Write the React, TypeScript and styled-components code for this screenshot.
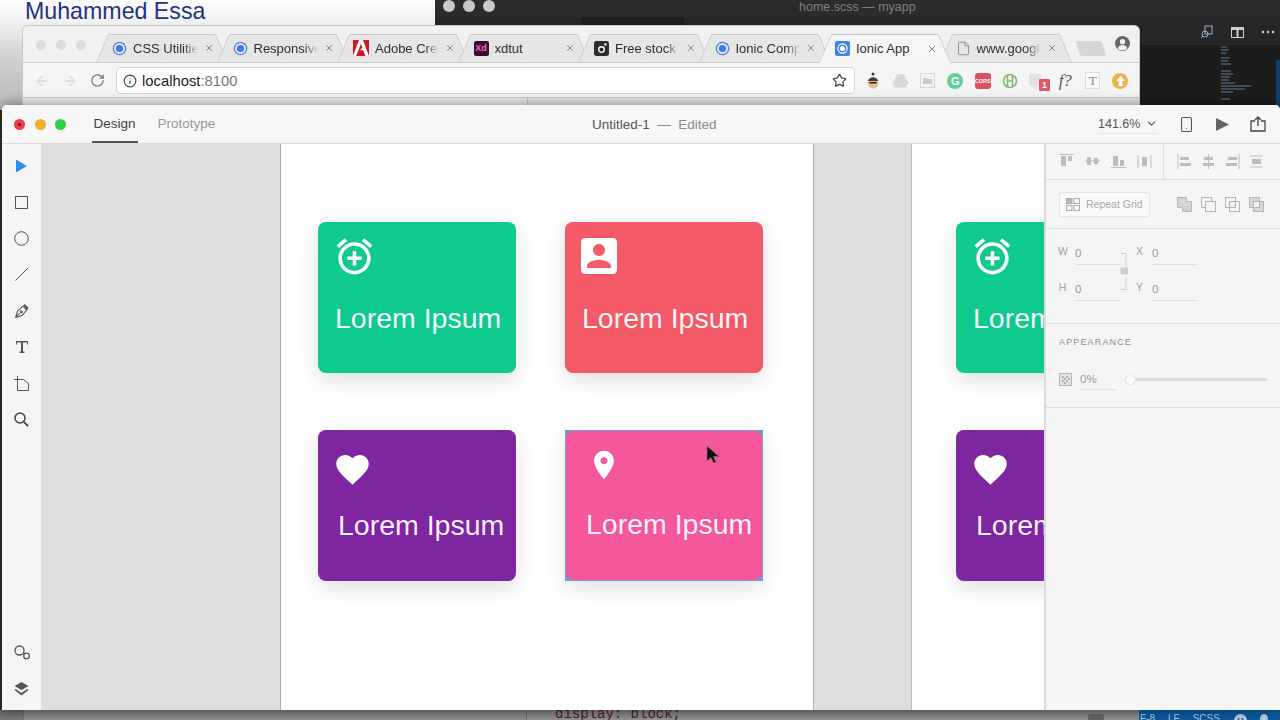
import React from "react";
import styled, { createGlobalStyle } from "styled-components";
import { ChevronDown, Smartphone, RotateCw, ArrowLeft, ArrowRight, Star, Info, File, X } from "lucide-react";

const Global = createGlobalStyle`
  html, body { margin: 0; padding: 0; background: #333; }
  body { font-family: "Liberation Sans", Arial, sans-serif; }
`;

const Desktop = styled.div`
  position: relative; width: 1280px; height: 720px; overflow: hidden;
  background: #3a2a2a;
`;

/* ---------- background document ---------- */
const DocWindow = styled.div`
  position: absolute; left: 0; top: 0; width: 435px; height: 110px;
  background: linear-gradient(#fdfdfd 0, #f4f4f4 18px, #cfcfcf 60px, #b8b8b8 100%);
`;
const DocTitle = styled.div`
  padding-left: 25px; font-size: 23.2px; line-height: 23px; color: #23337c;
`;

/* ---------- background editor ---------- */
const EditorWindow = styled.div`
  position: absolute; left: 435px; top: 0; right: 0; height: 110px; background: #1c1c1c;
`;
const EditorBar = styled.div`
  display: flex; align-items: center; height: 17px; padding-left: 8px; gap: 8px;
  background: #2b2b2b; position: relative;
`;
const EditorDot = styled.span`
  width: 12px; height: 12px; border-radius: 50%; background: #c9c9c9; margin-top: -6px;
`;
const EditorTitle = styled.div`
  position: absolute; left: 364px; top: 0; font-size: 12.5px; line-height: 14px; color: #7f7f7f;
`;
const EditorTabs = styled.div`
  display: flex; height: 28px; background: #262626;
`;
const EditorTab = styled.div<{ $w: number; $bg: string }>`
  width: ${(p) => p.$w}px; background: ${(p) => p.$bg};
`;
const EditorActions = styled.div`
  position: absolute; left: 765px; top: 24px; height: 16px;
  display: flex; gap: 17px; align-items: center; color: #b9b9b9;
`;
const Minimap = styled.svg`
  position: absolute; left: 785px; top: 44px;
`;
const EditorScroll = styled.div`
  position: absolute; right: 0; top: 60px; width: 4px; height: 50px; background: #0f3f68;
`;

/* ---------- Chrome ---------- */
const ChromeWindow = styled.div`
  position: absolute; left: 23px; top: 26px; width: 1116px; height: 84px;
  border-radius: 5px 5px 0 0; background: #f4f4f4; overflow: hidden;
  box-shadow: 0 0 0 1px #c8c8c8;
`;
const TabStrip = styled.div`
  display: flex; height: 37px; align-items: flex-end; background: #f1f1f1; position: relative;
  border-bottom: 1px solid #cfcfcf; box-sizing: border-box; padding-left: 79px;
`;
const GreyDots = styled.div`
  position: absolute; left: 13px; top: 14px; display: flex; gap: 10px;
`;
const GreyDot = styled.span`
  width: 10px; height: 10px; border-radius: 50%; background: #dcdcdc;
`;
const Tab = styled.div<{ $active?: boolean }>`
  position: relative; isolation: isolate; box-sizing: border-box; flex: none;
  width: 120.5px; height: ${(p) => (p.$active ? 29 : 28)}px; margin-bottom: ${(p) => (p.$active ? -1 : 0)}px;
  display: flex; align-items: center; gap: 6px; padding: 0 9px 0 10px;
  font-size: 13px; color: #2e2e2e;
  ${(p) => (p.$active ? "z-index: 1;" : "")}
  &::before, &::after {
    content: ""; position: absolute; top: 0; bottom: 0; width: 55%; z-index: -1;
    background: ${(p) => (p.$active ? "#f6f6f6" : "#e6e6e6")};
    border-top: 1px solid #c6c6c6; box-sizing: border-box;
  }
  &::before { left: 0; transform: skewX(-23deg); border-left: 1px solid #c2c2c2; border-radius: 2px 0 0 0; }
  &::after { right: 0; transform: skewX(23deg); border-right: 1px solid #c2c2c2; border-radius: 0 2px 0 0; }
`;
const TabTitle = styled.span<{ $fade?: boolean }>`
  flex: 1; min-width: 0; overflow: hidden; white-space: nowrap;
  ${(p) => (p.$fade ? "mask-image: linear-gradient(90deg, #000 78%, transparent 100%);" : "")}
`;
const TabClose = styled(X)`
  flex: none; width: 10px; height: 10px; color: #555;
`;
const TabFile = styled(File)`
  flex: none; color: #777;
`;
const TabSvg = styled.svg`
  flex: none;
`;
const NewTab = styled.div`
  width: 26px; height: 15px; margin: 0 0 6px 12px; background: #d6d6d6; transform: skewX(18deg); border-radius: 2px;
`;
const Avatar = styled.svg`
  position: absolute; right: 9px; top: 10px;
`;
const ChromeBar = styled.div`
  display: flex; align-items: center; height: 35px; box-sizing: border-box;
  padding: 1px 0 0 11px; background: #f5f5f5; border-bottom: 1px solid #cfcfcf;
`;
const NavBtn = styled.span<{ $c: string }>`
  display: flex; width: 28px; justify-content: flex-start; color: ${(p) => p.$c};
`;
const Omnibox = styled.div`
  display: flex; align-items: center; width: 739px; height: 27px; margin-left: -2px; box-sizing: border-box;
  background: #fff; border: 1px solid #d5d5d5; border-radius: 4px; padding: 0 7px 0 6px; gap: 5px;
  font-size: 14.8px; color: #222;
`;
const Port = styled.span`
  color: #777;
`;
const OmniSpacer = styled.span` flex: 1; `;
const Extensions = styled.div`
  display: flex; align-items: center; margin-left: 4px;
`;
const Ext = styled.div`
  position: relative; width: 27.5px; height: 20px; display: flex; align-items: center; justify-content: center;
`;
const ExtCircle = styled.div<{ $bg: string }>`
  display: flex; align-items: center; justify-content: center;
  width: 16px; height: 16px; border-radius: 50%; background: ${(p) => p.$bg}; color: #fff; font-size: 11px; font-weight: bold;
`;
const CorsBadge = styled.div`
  width: 16px; height: 16px; border-radius: 3px; background: #d9505f; color: #fff;
  font-size: 5.5px; font-weight: bold; line-height: 16px; text-align: center;
`;
const CountBadge = styled.div`
  position: absolute; left: 15px; top: 8px; width: 11px; height: 12px; background: #dc5a68; color: #fff;
  font-size: 9px; line-height: 12px; font-weight: bold; text-align: center; border-radius: 1px;
`;
const Shield = styled.svg`
  margin-left: -6px;
`;
const FHelp = styled.span`
  font-family: "Liberation Serif", serif; font-style: italic; font-size: 17px; color: #555;
`;
const TBox = styled.div`
  width: 13px; height: 15px; border: 1px solid #ddd; background: #fafafa; color: #888;
  font-family: "Liberation Serif", serif; font-size: 13px; line-height: 15px; text-align: center;
`;
const ChromeBelow = styled.div`
  display: flex; height: 12px; background: #e6e6e6;
`;
const BelowPane = styled.div<{ $w: number }>`
  width: ${(p) => p.$w}px; border-right: 1px solid #c4c4c4; background: #eee;
`;
const Favicon = styled.div<{ $bg: string; $c?: string; $s?: number }>`
  flex: none; display: flex; align-items: center; justify-content: center;
  width: ${(p) => p.$s ?? 15}px; height: ${(p) => p.$s ?? 15}px; border-radius: 2px; background: ${(p) => p.$bg};
  color: ${(p) => p.$c ?? "#fff"}; font-size: 9px; font-weight: bold;
`;

/* ---------- XD ---------- */
const XdWindow = styled.div`
  position: absolute; left: 2px; top: 105px; width: 1278px; height: 605px;
  display: flex; flex-direction: column; background: #f5f5f5; overflow: hidden;
  border-radius: 5px 5px 0 0; box-shadow: 0 0 14px rgba(0,0,0,.45);
`;
const XdTitleBar = styled.div`
  flex: none; display: grid; grid-template-columns: 590px auto 1fr; align-items: center; height: 39px;
  box-sizing: border-box; background: #f7f7f7; border-bottom: 1px solid #dcdcdc; font-size: 13px;
`;
const XdLeft = styled.div`
  display: flex; align-items: center; height: 100%; padding-left: 12px;
`;
const Light = styled.span<{ $c: string }>`
  width: 11px; height: 11px; border-radius: 50%; background: ${(p) => p.$c}; margin-right: 9.5px;
  display: flex; align-items: center; justify-content: center;
`;
const LightPip = styled.span`
  width: 3px; height: 3px; border-radius: 50%; background: #5a0b10;
`;
const ModeTab = styled.div<{ $on?: boolean }>`
  display: flex; align-items: center; height: 100%; box-sizing: border-box; padding: 0 2px; font-size: 13.5px;
  color: ${(p) => (p.$on ? "#444" : "#9a9a9a")};
  border-bottom: 2px solid ${(p) => (p.$on ? "#555" : "transparent")};
  margin-left: ${(p) => (p.$on ? "16px" : "18px")};
`;
const DocName = styled.div`
  color: #555; font-size: 13.5px; white-space: nowrap;
`;
const Edited = styled.span`
  color: #8c8c8c;
`;
const XdRight = styled.div`
  display: flex; align-items: center; justify-content: flex-end; padding-right: 4px; color: #555;
`;
const Zoom = styled.div`
  display: flex; align-items: center; justify-content: space-between; width: 60px; height: 100%;
  font-size: 12.5px; color: #555; padding: 2px 0; border-bottom: 1px solid #e2e2e2; margin-right: 10px;
`;
const XdBtn = styled.span`
  display: flex; width: 36px; justify-content: center;
`;
const XdBody = styled.div`
  flex: 1; display: flex; min-height: 0;
`;
const ToolRail = styled.div`
  flex: none; width: 39px; display: flex; flex-direction: column; align-items: center; padding: 4px 0 3px; background: #f5f5f5;
`;
const Tool = styled.div<{ $push?: boolean }>`
  display: flex; align-items: center; justify-content: center; width: 100%; height: 36.2px; color: #555;
  ${(p) => (p.$push ? "margin-top: auto;" : "")}
`;
const Canvas = styled.div`
  flex: 1; display: flex; min-width: 0; background: #dedede; overflow: hidden; padding-left: 239px;
`;
const Artboard = styled.div<{ $w: number; $pad: number }>`
  flex: none; box-sizing: border-box; width: ${(p) => p.$w}px; background: #fff; border-left: 1px solid #aaa; border-right: 1px solid #aaa;
  padding: 78px 0 0 ${(p) => p.$pad}px;
`;
const ArtboardTwo = styled(Artboard)`
  margin-left: 97px; border-left: 1px solid #bbb; border-right: none; overflow: hidden;
`;
const CardGrid = styled.div`
  display: grid; grid-template-columns: 198px 198px; grid-auto-rows: 151px; column-gap: 49px; row-gap: 57px;
`;
const Card = styled.div<{ $bg: string }>`
  position: relative; background: ${(p) => p.$bg}; border-radius: 8px; color: rgba(255,255,255,.94);
  box-shadow: 0 7px 22px rgba(0,0,0,.13);
`;
const CardBody = styled.div<{ $ix: number; $iy: number; $tx: number; $ty: number }>`
  display: flex; flex-direction: column; align-items: flex-start; padding-top: ${(p) => p.$iy}px;
  svg { margin-left: ${(p) => p.$ix}px; flex: none; }
  span { margin: ${(p) => p.$ty}px 0 0 ${(p) => p.$tx}px; }
`;
const CardLabel = styled.span`
  font-size: 28.5px; line-height: 34px; white-space: nowrap;
`;
const Selection = styled.div`
  position: absolute; inset: 0; border: 1px solid #7b9bdc; pointer-events: none;
`;
const Handle = styled.i<{ $x: "left" | "right"; $y: "top" | "bottom" }>`
  position: absolute; width: 4px; height: 4px; background: #5d9fe0;
  ${(p) => p.$x}: -1px; ${(p) => p.$y}: -1px;
`;
const Cursor = styled.svg`
  position: absolute; left: 140px; top: 14px;
`;

/* ---------- property panel ---------- */
const Panel = styled.div`
  flex: none; width: 235px; box-sizing: border-box; background: #f5f5f5; border-left: 1px solid #d8d8d8;
  display: flex; flex-direction: column; color: #aaa; font-size: 11px;
`;
const PanelSection = styled.div<{ $h: number }>`
  flex: none; height: ${(p) => p.$h}px; box-sizing: border-box; border-bottom: 1px solid #dedede;
`;
const AlignRow = styled(PanelSection)`
  display: grid; grid-template-columns: 117px 1fr;
`;
const AlignGroup = styled.div<{ $line?: boolean }>`
  display: flex; align-items: center; gap: ${(p) => (p.$line ? "9px" : "11px")}; padding-left: 13px;
  ${(p) => (p.$line ? "border-left: 1px solid #dedede;" : "")}
`;
const GridRow = styled(PanelSection)`
  display: flex; align-items: center; padding-left: 13px;
`;
const RepeatBtn = styled.div`
  display: flex; align-items: center; gap: 6px; width: 91px; height: 25px; box-sizing: border-box; padding-left: 6px;
  background: #f9f9f9; border: 1px solid #e4e4e4; border-radius: 3px; font-size: 10.5px; color: #a9a9a9;
`;
const BoolGroup = styled.div`
  display: flex; gap: 9px; margin-left: 27px;
`;
const TransformGrid = styled(PanelSection)`
  position: relative; display: grid; grid-template-columns: 77px 70px; grid-auto-rows: 36px; padding: 4px 0 0 12px;
`;
const Field = styled.div`
  display: flex; align-items: center; gap: 8px; height: 36px;
`;
const FieldKey = styled.span`
  width: 9px; font-size: 10.5px; color: #a0a0a0; text-align: center;
`;
const FieldValue = styled.span<{ $w: number }>`
  width: ${(p) => p.$w}px; height: 24px; box-sizing: border-box; line-height: 24px; margin-top: 4px; font-size: 11.5px;
  color: #999; border-bottom: 1px solid #e0e0e0;
`;
const LockLink = styled.svg`
  position: absolute; left: 74px; top: 24px;
`;
const Appearance = styled(PanelSection)`
  padding: 12px 0 0 13px;
`;
const SectionLabel = styled.div`
  font-size: 9px; line-height: 12px; letter-spacing: 1.15px; color: #8f8f8f;
`;
const OpacityRow = styled.div`
  display: flex; align-items: center; margin-top: 19px; height: 24px;
`;
const OpacityValue = styled.span`
  margin-left: 8px; width: 36px; height: 22px; line-height: 22px; box-sizing: border-box; font-size: 11.5px;
  color: #999; border-bottom: 1px solid #e0e0e0;
`;
const Slider = styled.div`
  position: relative; width: 137px; height: 3px; margin-left: 14px; background: #dadada; border-radius: 2px;
`;
const Knob = styled.div`
  position: absolute; left: -5px; top: -4px; width: 11px; height: 11px; border-radius: 50%; background: #fbfbfb; border: 1px solid #e2e2e2; box-sizing: border-box;
`;

/* ---------- peek at the bottom ---------- */
const BottomStrip = styled.div`
  position: absolute; left: 0; right: 0; bottom: 0; height: 10px; display: flex; overflow: hidden;
`;
const BottomEdge = styled.div`
  flex: none; width: 23px; background: linear-gradient(#666, #7a7a7a);
`;
const BottomPane = styled.div`
  flex: none; width: 504px; box-sizing: border-box; background: linear-gradient(#777, #8f8f8f); border: 1px solid #6c6c6c; border-width: 0 1px;
`;
const BottomCode = styled.div`
  flex: none; display: flex; width: 612px; box-sizing: border-box; padding: 0 35px 0 28px; background: linear-gradient(#777, #949494);
  font-family: "Liberation Mono", monospace; font-size: 14px; line-height: 9px; color: #4c1a22;
`;
const ScrollBlob = styled.span`
  flex: none; width: 16px; height: 8px; margin: 4px 0 0 auto; border-radius: 3px; background: #666;
`;
const StatusBar = styled.div`
  flex: 1; display: flex; background: #0a5a9e; color: #b7cfe6; font-size: 10px; line-height: 17px; gap: 13px; padding-left: 1px; white-space: nowrap;
`;
const StatusIcons = styled.div`
  display: flex; gap: 11px; margin: 4px 0 0 1px;
`;

/* ---------- drawings ---------- */
const IonicIcon = () => (
  <TabSvg width="15" height="15" viewBox="0 0 16 16">
    <circle cx="8" cy="8" r="6.6" fill="none" stroke="#4f7fe0" strokeWidth="1.4" />
    <circle cx="8" cy="8" r="3.8" fill="#3f78ea" />
    <circle cx="12.6" cy="3.3" r="1" fill="#4f7fe0" />
  </TabSvg>
);
const AdobeIcon = () => (
  <TabSvg width="16" height="16" viewBox="0 0 15 15">
    <rect width="15" height="15" fill="#d8141c" />
    <polygon points="5.6,0 9.4,0 15,15 11.6,15 9.6,9.5 6.6,9.5 8.8,7 7.5,3.4 3,15 0,15" fill="#fff" />
  </TabSvg>
);
const InstaIcon = () => (
  <TabSvg width="15" height="15" viewBox="0 0 14 14">
    <rect width="14" height="14" rx="2.5" fill="#2d2d2d" />
    <circle cx="7" cy="8" r="2.6" fill="none" stroke="#fff" strokeWidth="1.3" />
    <rect x="9.6" y="2.2" width="2" height="2" fill="#fff" />
  </TabSvg>
);

const AlarmAdd = () => (
  <svg width="43" height="43" viewBox="0 0 24 24" fill="#fff">
    <path d="M7.88 3.39L6.6 1.86 2 5.71l1.29 1.53 4.59-3.85zM22 5.72l-4.6-3.86-1.29 1.53 4.6 3.86L22 5.72zM12 4c-4.97 0-9 4.03-9 9s4.02 9 9 9c4.97 0 9-4.03 9-9s-4.03-9-9-9zm0 16c-3.87 0-7-3.13-7-7s3.13-7 7-7 7 3.13 7 7-3.13 7-7 7zm1-11h-2v3H8v2h3v3h2v-3h3v-2h-3V9z" />
  </svg>
);
const AccountBox = () => (
  <svg width="48" height="48" viewBox="0 0 24 24" fill="#fff">
    <path d="M3 5v14c0 1.1.89 2 2 2h14c1.1 0 2-.9 2-2V5c0-1.1-.9-2-2-2H5c-1.11 0-2 .9-2 2zm12 4c0 1.66-1.34 3-3 3s-3-1.34-3-3 1.34-3 3-3 3 1.34 3 3zm-9 8c0-2 4-3.1 6-3.1s6 1.1 6 3.1v1H6v-1z" />
  </svg>
);
const Heart = () => (
  <svg width="39" height="39" viewBox="0 0 24 24" fill="#fff">
    <path d="M12 21.35l-1.45-1.32C5.4 15.36 2 12.28 2 8.5 2 5.42 4.42 3 7.5 3c1.74 0 3.41.81 4.5 2.09C13.09 3.81 14.76 3 16.5 3 19.58 3 22 5.42 22 8.5c0 3.78-3.4 6.86-8.55 11.54L12 21.35z" />
  </svg>
);
const Pin = () => (
  <svg width="34" height="34" viewBox="0 0 24 24" fill="#fff">
    <path d="M12 2C8.13 2 5 5.13 5 9c0 5.25 7 13 7 13s7-7.75 7-13c0-3.87-3.13-7-7-7zm0 9.5c-1.38 0-2.5-1.12-2.5-2.5s1.12-2.5 2.5-2.5 2.5 1.12 2.5 2.5-1.12 2.5-2.5 2.5z" />
  </svg>
);

const alignPaths: string[] = [
  "M0 .5h15M2 2h5v10H2zM9 2h4v5H9z",
  "M0 7h15M2 3h4v8H2zM9 4h4v6H9z",
  "M0 13.5h15M2 2h5v10H2zM9 6h4v6H9z",
  "M1 1v13M14 1v13M5 3h5v9H5z",
  "M1 0v15M3 3h9v3H3zM3 9h11v3H3z",
  "M7.5 0v15M3 3h9v3H3zM2 9h11v3H2z",
  "M14 0v15M3 3h9v3H3zM1 9h11v3H1z",
  "M1 2h13M1 13h13M3 5h9v5H3z",
];
const AlignIcon = ({ d }: { d: string }) => (
  <svg width="15" height="15" viewBox="0 0 15 15">
    {d.split("M").filter(Boolean).map((seg, i) =>
      seg.includes("z") ? <path key={i} d={"M" + seg} fill="#bdbdbd" /> : <path key={i} d={"M" + seg} stroke="#bdbdbd" fill="none" />
    )}
  </svg>
);
const BoolIcon = ({ kind }: { kind: number }) => (
  <svg width="15" height="15" viewBox="0 0 15 15" fill="none" stroke="#b5b5b5">
    {kind === 0 && <path d="M.5.5h9v4h5v10h-9v-4h-5z" fill="#d4d4d4" />}
    {kind === 1 && <><rect x="4.5" y="4.5" width="10" height="10" fill="#f5f5f5" /><path d="M4.5 10.5h-4v-10h10v4" /></>}
    {kind === 2 && <><rect x=".5" y=".5" width="10" height="10" /><rect x="4.5" y="4.5" width="10" height="10" /><rect x="4.5" y="4.5" width="6" height="6" fill="#f0f0f0" /></>}
    {kind === 3 && <><rect x=".5" y=".5" width="10" height="10" fill="#d8d8d8" /><rect x="4.5" y="4.5" width="10" height="10" fill="#d8d8d8" /><rect x="4.5" y="4.5" width="6" height="6" fill="#f5f5f5" /></>}
  </svg>
);

type CardSpec = { bg: string; ix: number; iy: number; tx: number; ty: number; icon: React.ReactNode };
const cards: CardSpec[] = [
  { bg: "#0fca8f", ix: 15, iy: 13, tx: 17, ty: 23, icon: <AlarmAdd /> },
  { bg: "#f45a68", ix: 10, iy: 10, tx: 17, ty: 21, icon: <AccountBox /> },
  { bg: "#7e25a0", ix: 15, iy: 20, tx: 20, ty: 19, icon: <Heart /> },
  { bg: "#f4579c", ix: 22, iy: 18, tx: 21, ty: 25, icon: <Pin /> },
];

const CardCells = ({ selected }: { selected?: boolean }) => (
  <CardGrid>
    {cards.map((c, i) => (
      <Card key={i} $bg={c.bg}>
        <CardBody $ix={c.ix} $iy={c.iy} $tx={c.tx} $ty={c.ty}>
          {c.icon}
          <CardLabel>Lorem Ipsum</CardLabel>
        </CardBody>
        {selected && i === 3 && (
          <Selection>
            <Handle $x="left" $y="top" />
            <Handle $x="right" $y="top" />
            <Handle $x="left" $y="bottom" />
            <Handle $x="right" $y="bottom" />
            <Cursor width="14" height="20" viewBox="0 0 14 20">
              <path d="M1 1v15l4-3.5 2.6 5.5 2.4-1.1-2.6-5.4H13z" fill="#111" stroke="#777" strokeWidth=".6" />
            </Cursor>
          </Selection>
        )}
      </Card>
    ))}
  </CardGrid>
);

const tabs: { icon: React.ReactNode; title: string; fade?: boolean }[] = [
  { icon: <IonicIcon />, title: "CSS Utilities", fade: true },
  { icon: <IonicIcon />, title: "Responsive", fade: true },
  { icon: <AdobeIcon />, title: "Adobe Creative", fade: true },
  { icon: <Favicon $bg="#3d0a33" $c="#f06cc4">Xd</Favicon>, title: "xdtut" },
  { icon: <InstaIcon />, title: "Free stock photos", fade: true },
  { icon: <IonicIcon />, title: "Ionic Components", fade: true },
];

export default function App() {
  return (
    <>
      <Global />
      <Desktop>
        <DocWindow>
          <DocTitle>Muhammed Essa</DocTitle>
        </DocWindow>

        <EditorWindow>
          <EditorBar>
            <EditorDot />
            <EditorDot />
            <EditorDot />
            <EditorTitle>home.scss — myapp</EditorTitle>
          </EditorBar>
          <EditorTabs>
            <EditorTab $w={147} $bg="#262626" />
            <EditorTab $w={102} $bg="#1d1d1d" />
            <EditorTab $w={96} $bg="#262626" />
          </EditorTabs>
          <EditorActions>
            <svg width="14" height="14" viewBox="0 0 14 14" fill="none" stroke="#9db4c8"><rect x="5" y="1" width="7" height="8" /><circle cx="5" cy="9" r="3" /><path d="M1 13l2-2" /></svg>
            <svg width="13" height="13" viewBox="0 0 13 13" fill="none" stroke="#cfcfcf"><rect x=".5" y="1.5" width="12" height="10" /><path d="M6.5 1.5v10M.5 3h12" strokeWidth="2" /></svg>
            <svg width="14" height="4" viewBox="0 0 14 4" fill="#cfcfcf"><circle cx="2" cy="2" r="1.2" /><circle cx="7" cy="2" r="1.2" /><circle cx="12" cy="2" r="1.2" /></svg>
          </EditorActions>
          <Minimap width="32" height="62" viewBox="0 0 32 62" stroke="#5d7f96" strokeWidth="1">
            <path d="M1 3h6M1 6h8M1 9h5M1 14h9M1 17h7M1 20h10" />
            <path d="M1 27h10M1 30h12M1 33h9M1 36h8M1 39h14M1 42h30M1 45h24M1 48h12M1 55h9" />
          </Minimap>
          <EditorScroll />
        </EditorWindow>

        <ChromeWindow>
          <TabStrip>
            <GreyDots>
              <GreyDot />
              <GreyDot />
              <GreyDot />
            </GreyDots>
            {tabs.map((t, i) => (
              <Tab key={i}>
                {t.icon}
                <TabTitle $fade={t.fade}>{t.title}</TabTitle>
                <TabClose strokeWidth={1.6} />
              </Tab>
            ))}
            <Tab $active>
              <Favicon $bg="#3f86e8" $s={15}>
                <svg width="11" height="11" viewBox="0 0 12 12"><circle cx="6" cy="6" r="5" fill="none" stroke="#fff" strokeWidth="1.3" /><circle cx="6" cy="6" r="2.8" fill="#fff" /></svg>
              </Favicon>
              <TabTitle>Ionic App</TabTitle>
              <TabClose strokeWidth={1.6} />
            </Tab>
            <Tab>
              <TabFile size={15} strokeWidth={1.2} />
              <TabTitle $fade>www.google.com</TabTitle>
              <TabClose strokeWidth={1.6} />
            </Tab>
            <NewTab />
            <Avatar width="15" height="15" viewBox="0 0 16 16">
              <circle cx="8" cy="8" r="8" fill="#666" />
              <circle cx="8" cy="6" r="2.8" fill="#f4f4f4" />
              <path d="M2.8 13c1-2.6 3-3.4 5.2-3.4s4.2.8 5.2 3.4A7 7 0 0 1 2.8 13z" fill="#f4f4f4" />
            </Avatar>
          </TabStrip>
          <ChromeBar>
            <NavBtn $c="#dcdcdc"><ArrowLeft size={16} /></NavBtn>
            <NavBtn $c="#dcdcdc"><ArrowRight size={16} /></NavBtn>
            <NavBtn $c="#777"><RotateCw size={15} /></NavBtn>
            <Omnibox>
              <Info size={14} color="#444" />
              <span>localhost<Port>:8100</Port></span>
              <OmniSpacer />
              <Star size={15} color="#444" />
            </Omnibox>
            <Extensions>
              <Ext>
                <svg width="14" height="17" viewBox="0 0 14 17"><circle cx="7" cy="11" r="5.5" fill="#e4c08e" /><path d="M2 9c1-5 9-5 10 0z" fill="#3d3d3d" /><circle cx="7" cy="2" r="1.5" fill="#3d3d3d" /><rect x="3.5" y="10" width="7" height="1.5" fill="#222" /></svg>
              </Ext>
              <Ext>
                <svg width="17" height="15" viewBox="0 0 17 15" fill="#d8d8d8"><path d="M5.5 1h6l5 9-3 4.5h-10L.5 10z" /></svg>
              </Ext>
              <Ext>
                <svg width="15" height="15" viewBox="0 0 15 15"><rect x=".5" y=".5" width="14" height="14" fill="#f2f2f2" stroke="#d8d8d8" /><path d="M3 5h4l1 1h4v5H3z" fill="#ccc" /></svg>
              </Ext>
              <Ext><ExtCircle $bg="#5fcf9d">G</ExtCircle></Ext>
              <Ext><CorsBadge>CORS</CorsBadge></Ext>
              <Ext>
                <svg width="16" height="16" viewBox="0 0 16 16" fill="none" stroke="#8ab37a" strokeWidth="1.6"><circle cx="8" cy="8" r="6.5" /><path d="M5.5 2.5v11M10.5 2.5v11M5.5 8h5" /></svg>
              </Ext>
              <Ext>
                <Shield width="14" height="16" viewBox="0 0 14 16" fill="#e2e2e2"><path d="M1 1h12v7c0 4-3 6-6 8-3-2-6-4-6-8z" /></Shield>
                <CountBadge>1</CountBadge>
              </Ext>
              <Ext><FHelp>f?</FHelp></Ext>
              <Ext><TBox>T</TBox></Ext>
              <Ext>
                <ExtCircle $bg="#efb34c">
                  <svg width="9" height="10" viewBox="0 0 9 10" fill="#fff"><path d="M4.5 0L9 5H6.5v5h-4V5H0z" /></svg>
                </ExtCircle>
              </Ext>
            </Extensions>
          </ChromeBar>
          <ChromeBelow>
            <BelowPane $w={504} />
          </ChromeBelow>
        </ChromeWindow>

        <BottomStrip>
          <BottomEdge />
          <BottomPane />
          <BottomCode>
            display: block;
            <ScrollBlob />
          </BottomCode>
          <StatusBar>
            <span>F-8</span>
            <span>LF</span>
            <span>SCSS</span>
            <StatusIcons>
              <svg width="13" height="13" viewBox="0 0 13 13"><circle cx="6.5" cy="6.5" r="6.5" fill="#b7cfe6" /><circle cx="4.5" cy="5" r="1" fill="#0a5a9e" /><circle cx="8.5" cy="5" r="1" fill="#0a5a9e" /></svg>
              <svg width="12" height="13" viewBox="0 0 12 13" fill="#b7cfe6"><path d="M6 0c3 0 4 3 4 6v3l2 2H0l2-2V6c0-3 1-6 4-6z" /></svg>
            </StatusIcons>
          </StatusBar>
        </BottomStrip>

        <XdWindow>
          <XdTitleBar>
            <XdLeft>
              <Light $c="#ec3d48"><LightPip /></Light>
              <Light $c="#f5ae2c" />
              <Light $c="#2fd14a" />
              <ModeTab $on>Design</ModeTab>
              <ModeTab>Prototype</ModeTab>
            </XdLeft>
            <DocName>Untitled-1 <Edited>&nbsp;—&nbsp; Edited</Edited></DocName>
            <XdRight>
              <Zoom>141.6%<ChevronDown size={13} /></Zoom>
              <XdBtn><Smartphone size={17} strokeWidth={1.5} /></XdBtn>
              <XdBtn>
                <svg width="13" height="13" viewBox="0 0 13 13" fill="#666"><path d="M0 0l13 6.5L0 13z" /></svg>
              </XdBtn>
              <XdBtn>
                <svg width="16" height="16" viewBox="0 0 16 16" fill="none" stroke="#444" strokeWidth="1.3"><path d="M5 5H1v10h14V5h-4M8 10V1M5 4l3-3 3 3" /></svg>
              </XdBtn>
            </XdRight>
          </XdTitleBar>
          <XdBody>
            <ToolRail>
              <Tool>
                <svg width="11" height="14" viewBox="0 0 12 14" fill="#2e8fe0"><path d="M0 0l12 7-12 7z" /></svg>
              </Tool>
              <Tool>
                <svg width="13" height="13" viewBox="0 0 13 13" fill="none" stroke="#555"><rect x=".5" y=".5" width="12" height="12" /></svg>
              </Tool>
              <Tool>
                <svg width="15" height="15" viewBox="0 0 15 15" fill="none" stroke="#555"><circle cx="7.5" cy="7.5" r="6.8" /></svg>
              </Tool>
              <Tool>
                <svg width="13" height="13" viewBox="0 0 13 13" fill="none" stroke="#555"><path d="M.5 12.5l12-12" /></svg>
              </Tool>
              <Tool>
                <svg width="14" height="14" viewBox="0 0 14 14" fill="none" stroke="#555" strokeWidth="1.1"><path d="M.7 13.3L2.5 7 8 2.2l3.8 3.8L7 11.5z" /><path d="M.7 13.3l4-4" /><circle cx="6.3" cy="7.7" r="1" /><path d="M9 .9l4 4" strokeWidth="2.2" /></svg>
              </Tool>
              <Tool>
                <svg width="12" height="12" viewBox="0 0 12 12" fill="#555"><path d="M0 0h12v3.5h-1V1.5H7v9h1.5V12h-5v-1.5H5v-9H1v2H0z" /></svg>
              </Tool>
              <Tool>
                <svg width="15" height="15" viewBox="0 0 15 15" fill="none" stroke="#555"><path d="M3.5 3.5h6l5 4v7h-11zM3.5 0v6M0 3.5h6" /></svg>
              </Tool>
              <Tool>
                <svg width="15" height="15" viewBox="0 0 15 15" fill="none" stroke="#444" strokeWidth="1.5"><circle cx="6" cy="6" r="5" /><path d="M9.8 9.8l4.4 4.4" strokeWidth="1.8" /></svg>
              </Tool>
              <Tool $push>
                <svg width="16" height="15" viewBox="0 0 16 15" fill="none" stroke="#555" strokeWidth="1.3"><circle cx="5.5" cy="5.5" r="4.5" /><circle cx="12.5" cy="11" r="2.8" /></svg>
              </Tool>
              <Tool>
                <svg width="15" height="14" viewBox="0 0 15 14" fill="#555"><path d="M7.5 0l7 4-7 4-7-4z" /><path d="M1.8 7L.5 8l7 5.5 7-5.5-1.3-1-5.700 4z" /></svg>
              </Tool>
            </ToolRail>
            <Canvas>
              <Artboard $w={534} $pad={37}>
                <CardCells selected />
              </Artboard>
              <ArtboardTwo $w={133} $pad={44}>
                <CardCells />
              </ArtboardTwo>
            </Canvas>
            <Panel>
              <AlignRow $h={36}>
                <AlignGroup>
                  {alignPaths.slice(0, 4).map((d, i) => <AlignIcon key={i} d={d} />)}
                </AlignGroup>
                <AlignGroup $line>
                  {alignPaths.slice(4).map((d, i) => <AlignIcon key={i} d={d} />)}
                </AlignGroup>
              </AlignRow>
              <GridRow $h={49}>
                <RepeatBtn>
                  <svg width="14" height="13" viewBox="0 0 14 13" fill="none" stroke="#aaa"><rect x=".5" y=".5" width="5.5" height="5" fill="#bbb" /><rect x="8" y=".5" width="5.5" height="5" /><rect x=".5" y="7.5" width="5.5" height="5" /><rect x="8" y="7.5" width="5.5" height="5" /></svg>
                  Repeat Grid
                </RepeatBtn>
                <BoolGroup>
                  {[0, 1, 2, 3].map((k) => <BoolIcon key={k} kind={k} />)}
                </BoolGroup>
              </GridRow>
              <TransformGrid $h={95}>
                <Field><FieldKey>W</FieldKey><FieldValue $w={46}>0</FieldValue></Field>
                <Field><FieldKey>X</FieldKey><FieldValue $w={46}>0</FieldValue></Field>
                <Field><FieldKey>H</FieldKey><FieldValue $w={46}>0</FieldValue></Field>
                <Field><FieldKey>Y</FieldKey><FieldValue $w={46}>0</FieldValue></Field>
                <LockLink width="8" height="37" viewBox="0 0 8 37" fill="none" stroke="#cfcfcf">
                  <path d="M1 .5h5v13M1 36.5h5v-13" />
                  <rect x="1" y="15" width="7" height="6" fill="#cfcfcf" />
                </LockLink>
              </TransformGrid>
              <Appearance $h={84}>
                <SectionLabel>APPEARANCE</SectionLabel>
                <OpacityRow>
                  <svg width="13" height="13" viewBox="0 0 13 13"><rect x=".5" y=".5" width="12" height="12" fill="#e4e4e4" stroke="#b5b5b5" /><path d="M3 3h2v2H3zM7 3h2v2H7zM5 5h2v2H5zM9 5h2v2H9zM3 7h2v2H3zM7 7h2v2H7zM5 9h2v2H5z" fill="#b5b5b5" /></svg>
                  <OpacityValue>0%</OpacityValue>
                  <Slider><Knob /></Slider>
                </OpacityRow>
              </Appearance>
            </Panel>
          </XdBody>
        </XdWindow>
      </Desktop>
    </>
  );
}
